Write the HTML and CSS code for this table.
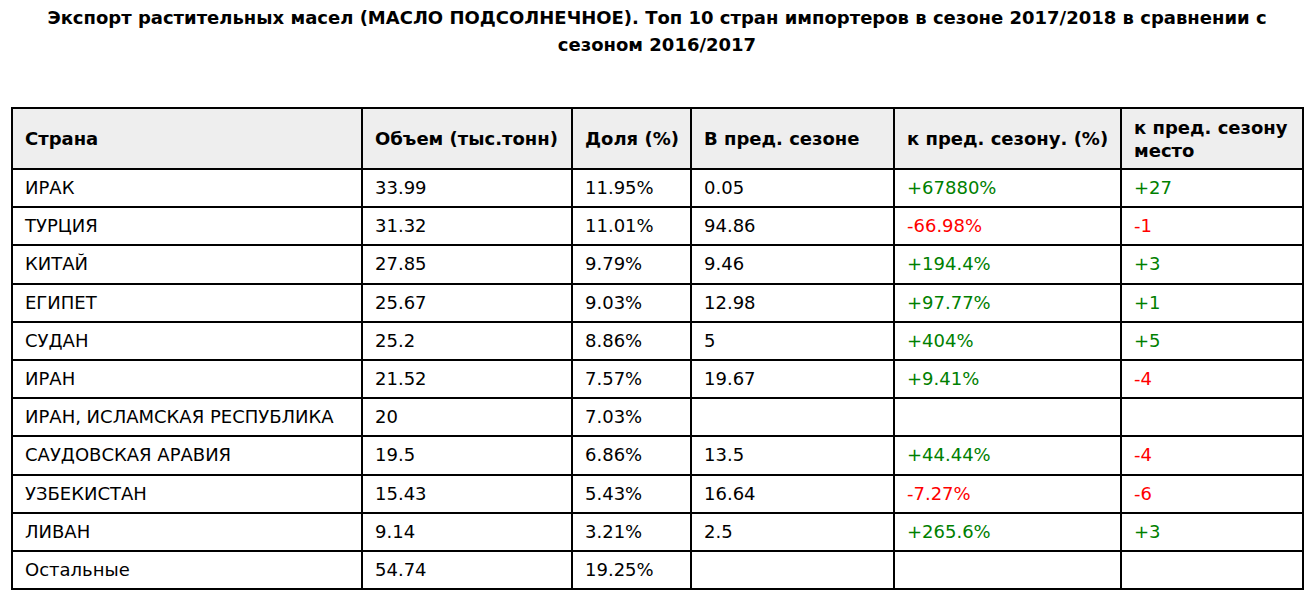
FILE: index.html
```html
<!DOCTYPE html>
<html lang="ru">
<head>
<meta charset="utf-8">
<link rel="stylesheet" href="styles.css">
</head>
<body>
<div class="page">
  <h1 class="title">Экспорт растительных масел (МАСЛО ПОДСОЛНЕЧНОЕ). Топ 10 стран импортеров в сезоне 2017/2018 в сравнении с сезоном 2016/2017</h1>
  <table class="data">
    <colgroup>
      <col class="c1"><col class="c2"><col class="c3"><col class="c4"><col class="c5"><col class="c6">
    </colgroup>
    <thead>
      <tr>
        <th>Страна</th>
        <th>Объем (тыс.тонн)</th>
        <th>Доля (%)</th>
        <th>В пред. сезоне</th>
        <th>к пред. сезону. (%)</th>
        <th>к пред. сезону место</th>
      </tr>
    </thead>
    <tbody>
      <tr><td>ИРАК</td><td>33.99</td><td>11.95%</td><td>0.05</td><td class="up">+67880%</td><td class="up">+27</td></tr>
      <tr><td>ТУРЦИЯ</td><td>31.32</td><td>11.01%</td><td>94.86</td><td class="down">-66.98%</td><td class="down">-1</td></tr>
      <tr><td>КИТАЙ</td><td>27.85</td><td>9.79%</td><td>9.46</td><td class="up">+194.4%</td><td class="up">+3</td></tr>
      <tr><td>ЕГИПЕТ</td><td>25.67</td><td>9.03%</td><td>12.98</td><td class="up">+97.77%</td><td class="up">+1</td></tr>
      <tr><td>СУДАН</td><td>25.2</td><td>8.86%</td><td>5</td><td class="up">+404%</td><td class="up">+5</td></tr>
      <tr><td>ИРАН</td><td>21.52</td><td>7.57%</td><td>19.67</td><td class="up">+9.41%</td><td class="down">-4</td></tr>
      <tr><td>ИРАН, ИСЛАМСКАЯ РЕСПУБЛИКА</td><td>20</td><td>7.03%</td><td></td><td></td><td></td></tr>
      <tr><td>САУДОВСКАЯ АРАВИЯ</td><td>19.5</td><td>6.86%</td><td>13.5</td><td class="up">+44.44%</td><td class="down">-4</td></tr>
      <tr><td>УЗБЕКИСТАН</td><td>15.43</td><td>5.43%</td><td>16.64</td><td class="down">-7.27%</td><td class="down">-6</td></tr>
      <tr><td>ЛИВАН</td><td>9.14</td><td>3.21%</td><td>2.5</td><td class="up">+265.6%</td><td class="up">+3</td></tr>
      <tr><td>Остальные</td><td>54.74</td><td>19.25%</td><td></td><td></td><td></td></tr>
    </tbody>
  </table>
</div>
</body>
</html>
```

FILE: styles.css
```css
html, body {
  margin: 0;
  padding: 0;
  background: #fff;
}
body {
  font-family: "DejaVu Sans", sans-serif;
  color: #000;
}
.page {
  padding: 4px 10px 0 11px;
}
.title {
  margin: 0;
  text-align: center;
  font-size: 18px;
  font-weight: bold;
  line-height: 27px;
}
.data {
  margin-top: 49px;
  border-collapse: collapse;
  table-layout: fixed;
  width: 1292px;
  font-size: 18px;
}
.c1 { width: 350px; }
.c2 { width: 210px; }
.c3 { width: 119px; }
.c4 { width: 203px; }
.c5 { width: 227px; }
.c6 { width: 182px; }
.data th, .data td {
  border: 2px solid #000;
  text-align: left;
  padding: 0 4px 0 12px;
}
.data th {
  background: #eeeeee;
  font-weight: bold;
  height: 59px;
  line-height: 23px;
}
.data td {
  height: 36.2px;
  line-height: 20px;
}
.up { color: #008000; }
.down { color: #ff0000; }
```
